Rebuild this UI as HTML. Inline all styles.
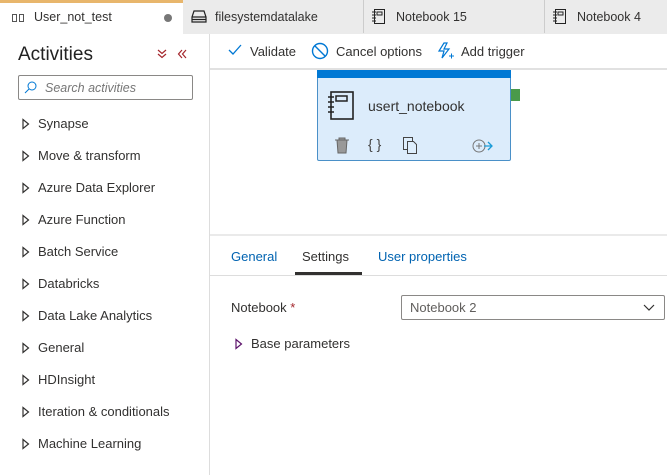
<!DOCTYPE html>
<html><head><style>
*{box-sizing:border-box;margin:0;padding:0}
body{width:667px;height:475px;overflow:hidden;background:#fff;font-family:"Liberation Sans",sans-serif;color:#323130;font-size:13px;position:relative}
.abs{position:absolute}
.tabbar{left:0;top:0;width:667px;height:34px;background:#ebebeb}
.tab{top:0;height:34px;font-size:12.5px;line-height:34px;white-space:nowrap}
.item{left:22px;font-size:13px}
.item svg{position:absolute;left:0;top:2px}
.item span{margin-left:16px}
</style></head><body>
<div class="abs tabbar"></div>
<div class="abs" style="left:0;top:0;width:183px;height:34px;background:#fff;border-top:3px solid #e8b66c"></div>
<svg class="abs" style="left:12px;top:14px" width="12" height="8"><rect x="0.5" y="0.5" width="4" height="7" fill="none" stroke="#555"/><rect x="7.5" y="0.5" width="4" height="7" fill="none" stroke="#555"/></svg>
<div class="abs tab" style="left:34px;color:#323130">User_not_test</div>
<div class="abs" style="left:164px;top:14px;width:8px;height:8px;border-radius:50%;background:#777"></div>
<svg class="abs" style="left:191px;top:10px" width="16" height="13"><path d="M3 1h10l2 6v5H1V7z M1 7h14 M1 9.5h14" fill="none" stroke="#222" stroke-width="1.2"/></svg>
<div class="abs tab" style="left:215px">filesystemdatalake</div>
<div class="abs" style="left:363px;top:0;width:1px;height:33px;background:#ccc"></div>
<div class="abs" style="left:544px;top:0;width:1px;height:33px;background:#ccc"></div>
<svg class="abs" style="left:372px;top:9px" width="14" height="16"><rect x="2.5" y="0.5" width="10" height="14" fill="none" stroke="#222"/><rect x="5" y="3" width="5" height="3" fill="none" stroke="#222"/><path d="M0 3h4M0 6h4M0 9h4M0 12h4" stroke="#222"/></svg>
<div class="abs tab" style="left:396px">Notebook 15</div>
<svg class="abs" style="left:553px;top:9px" width="14" height="16"><rect x="2.5" y="0.5" width="10" height="14" fill="none" stroke="#222"/><rect x="5" y="3" width="5" height="3" fill="none" stroke="#222"/><path d="M0 3h4M0 6h4M0 9h4M0 12h4" stroke="#222"/></svg>
<div class="abs tab" style="left:577px">Notebook 4</div>

<div class="abs" style="left:209px;top:34px;width:1px;height:441px;background:#ddd"></div>
<div class="abs" style="left:18px;top:44px;font-size:19px;color:#222">Activities</div>
<svg class="abs" style="left:157px;top:49px" width="10" height="10"><path d="M1 1l4 3.5 4-3.5M1 5l4 3.5 4-3.5" fill="none" stroke="#a4262c" stroke-width="1.2"/></svg>
<svg class="abs" style="left:177px;top:49px" width="10" height="10"><path d="M5 1L1.5 5 5 9M9 1L5.5 5 9 9" fill="none" stroke="#a4262c" stroke-width="1.2"/></svg>
<div class="abs" style="left:18px;top:75px;width:175px;height:25px;border:1px solid #8a8886;border-radius:2px"></div>
<svg class="abs" style="left:24px;top:81px" width="13" height="13"><circle cx="8" cy="5" r="4" fill="none" stroke="#0078d4"/><path d="M5 8L1 12" stroke="#0078d4"/></svg>
<div class="abs" style="left:45px;top:81px;font-size:12.5px;font-style:italic;color:#777">Search activities</div>
<div class="abs item" style="top:116px"><svg width="8" height="12"><path d="M1 1.5l5.5 4.5-5.5 4.5z" fill="none" stroke="#323130" stroke-width="1.2"/></svg><span>Synapse</span></div>
<div class="abs item" style="top:148px"><svg width="8" height="12"><path d="M1 1.5l5.5 4.5-5.5 4.5z" fill="none" stroke="#323130" stroke-width="1.2"/></svg><span>Move &amp; transform</span></div>
<div class="abs item" style="top:180px"><svg width="8" height="12"><path d="M1 1.5l5.5 4.5-5.5 4.5z" fill="none" stroke="#323130" stroke-width="1.2"/></svg><span>Azure Data Explorer</span></div>
<div class="abs item" style="top:212px"><svg width="8" height="12"><path d="M1 1.5l5.5 4.5-5.5 4.5z" fill="none" stroke="#323130" stroke-width="1.2"/></svg><span>Azure Function</span></div>
<div class="abs item" style="top:244px"><svg width="8" height="12"><path d="M1 1.5l5.5 4.5-5.5 4.5z" fill="none" stroke="#323130" stroke-width="1.2"/></svg><span>Batch Service</span></div>
<div class="abs item" style="top:276px"><svg width="8" height="12"><path d="M1 1.5l5.5 4.5-5.5 4.5z" fill="none" stroke="#323130" stroke-width="1.2"/></svg><span>Databricks</span></div>
<div class="abs item" style="top:308px"><svg width="8" height="12"><path d="M1 1.5l5.5 4.5-5.5 4.5z" fill="none" stroke="#323130" stroke-width="1.2"/></svg><span>Data Lake Analytics</span></div>
<div class="abs item" style="top:340px"><svg width="8" height="12"><path d="M1 1.5l5.5 4.5-5.5 4.5z" fill="none" stroke="#323130" stroke-width="1.2"/></svg><span>General</span></div>
<div class="abs item" style="top:372px"><svg width="8" height="12"><path d="M1 1.5l5.5 4.5-5.5 4.5z" fill="none" stroke="#323130" stroke-width="1.2"/></svg><span>HDInsight</span></div>
<div class="abs item" style="top:404px"><svg width="8" height="12"><path d="M1 1.5l5.5 4.5-5.5 4.5z" fill="none" stroke="#323130" stroke-width="1.2"/></svg><span>Iteration &amp; conditionals</span></div>
<div class="abs item" style="top:436px"><svg width="8" height="12"><path d="M1 1.5l5.5 4.5-5.5 4.5z" fill="none" stroke="#323130" stroke-width="1.2"/></svg><span>Machine Learning</span></div>

<div class="abs" style="left:210px;top:68px;width:457px;height:2px;background:#e1e1e1"></div>
<svg class="abs" style="left:228px;top:44px" width="14" height="12"><path d="M1 6l4 4 8-9" fill="none" stroke="#0078d4" stroke-width="1.3"/></svg>
<div class="abs" style="left:250px;top:44px">Validate</div>
<svg class="abs" style="left:311px;top:42px" width="18" height="18"><circle cx="9" cy="9" r="7.5" fill="none" stroke="#0078d4" stroke-width="1.4"/><path d="M4 4l10 10" stroke="#0078d4" stroke-width="1.4"/></svg>
<div class="abs" style="left:336px;top:44px">Cancel options</div>
<svg class="abs" style="left:437px;top:42px" width="18" height="18"><path d="M7 1L2 9h5l-2 7 7-9H7l3-6z" fill="none" stroke="#0078d4" stroke-width="1.2"/><path d="M12 14h5M14.5 11.5v5" stroke="#0078d4"/></svg>
<div class="abs" style="left:461px;top:44px">Add trigger</div>

<div class="abs" style="left:317px;top:70px;width:194px;height:91px;background:#dcecfb;border:1px solid #4a90c8;border-radius:2px"></div>
<div class="abs" style="left:317px;top:70px;width:194px;height:8px;background:#0078d4"></div>
<div class="abs" style="left:511px;top:89px;width:9px;height:12px;background:#4a9a4a"></div>
<svg class="abs" style="left:327px;top:91px" width="28" height="29"><rect x="4" y="1" width="22" height="27" fill="none" stroke="#222" stroke-width="1.6"/><rect x="9" y="5" width="11" height="5" fill="none" stroke="#222" stroke-width="1.5"/><path d="M1 6h6M1 11h6M1 16h6M1 21h6" stroke="#222" stroke-width="1.5"/></svg>
<div class="abs" style="left:368px;top:98px;font-size:14px">usert_notebook</div>
<svg class="abs" style="left:334px;top:137px" width="16" height="17"><path d="M1 3h14M5 3V1h6v2M3 3l1 13h8l1-13" fill="#999" stroke="#666"/></svg>
<div class="abs" style="left:368px;top:136px;font-size:14px;color:#444">{ }</div>
<svg class="abs" style="left:403px;top:137px" width="15" height="17"><rect x="0.5" y="0.5" width="9" height="12" fill="#deeefc" stroke="#444"/><path d="M4.5 4.5h6l3 3v9h-9z" fill="#deeefc" stroke="#444"/></svg>
<svg class="abs" style="left:472px;top:139px" width="22" height="14"><circle cx="7" cy="7" r="6" fill="none" stroke="#777"/><path d="M4 7h6M7 4v6" stroke="#777"/><path d="M12 7h8M16 3l4 4-4 4" fill="none" stroke="#1a9bd7" stroke-width="1.3"/></svg>

<div class="abs" style="left:210px;top:234px;width:457px;height:2px;background:#eaeaea"></div>
<div class="abs" style="left:231px;top:249px;color:#0063b1">General</div>
<div class="abs" style="left:302px;top:249px;color:#323130">Settings</div>
<div class="abs" style="left:378px;top:249px;color:#0063b1">User properties</div>
<div class="abs" style="left:295px;top:272px;width:67px;height:3px;background:#323130"></div>
<div class="abs" style="left:210px;top:275px;width:457px;height:1px;background:#ddd"></div>
<div class="abs" style="left:231px;top:300px">Notebook <span style="color:#a4262c">*</span></div>
<div class="abs" style="left:401px;top:295px;width:264px;height:25px;border:1px solid #8a8886;border-radius:2px"></div>
<div class="abs" style="left:410px;top:300px;color:#605e5c">Notebook 2</div>
<svg class="abs" style="left:643px;top:304px" width="12" height="8"><path d="M1 1l5 5 5-5" fill="none" stroke="#323130" stroke-width="1.2"/></svg>
<div class="abs item" style="left:235px;top:336px"><svg width="8" height="12"><path d="M1 1.5l5.5 4.5-5.5 4.5z" fill="none" stroke="#5c126b" stroke-width="1.2"/></svg><span>Base parameters</span></div>
</body></html>
